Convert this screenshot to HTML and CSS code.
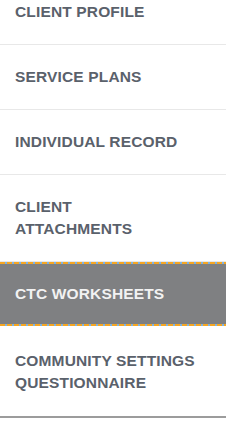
FILE: index.html
```html
<!DOCTYPE html>
<html lang="en">
<head>
    <meta charset="UTF-8">
    <meta name="viewport" content="width=device-width, initial-scale=1.0">
    <title>Client menu</title>
    <link rel="stylesheet" href="styles.css">
</head>
<body>
    <nav class="side-menu">
        <ul class="menu-list">
            <li class="menu-item"><a href="#">Client Profile</a></li>
            <li class="menu-item"><a href="#">Service Plans</a></li>
            <li class="menu-item"><a href="#">Individual Record</a></li>
            <li class="menu-item"><a href="#">Client<br>Attachments</a></li>
            <li class="menu-item active"><a href="#">CTC Worksheets</a></li>
            <li class="menu-item last"><a href="#">Community Settings<br>Questionnaire</a></li>
        </ul>
    </nav>
</body>
</html>
```

FILE: styles.css
```css
body {
    margin: 0;
    padding: 0;
    background: #fff;
    overflow: hidden;
}
.side-menu {
    width: 226px;
    margin-top: -20px;
}
.menu-list {
    list-style: none;
    margin: 0;
    padding: 0;
}
.menu-item {
    border-bottom: 1px solid #e8e8e8;
}
.menu-item a {
    display: block;
    padding: 21px 15px;
    font-family: "Liberation Sans", Arial, sans-serif;
    font-weight: bold;
    font-size: 15.5px;
    letter-spacing: 0.15px;
    line-height: 22px;
    text-transform: uppercase;
    text-decoration: none;
    color: #5a616b;
}
.menu-item.active {
    border-bottom: none;
    background-color: #7f8082;
    position: relative;
}
/* dashed focus strips, orange over blue */
.menu-item.active::before,
.menu-item.active::after {
    content: "";
    position: absolute;
    left: 0;
    right: 0;
    height: 2px;
    background: repeating-linear-gradient(90deg, #f5a623 0 5px, #7fb3e0 5px 7px);
}
.menu-item.active::before {
    top: 0;
}
.menu-item.active::after {
    bottom: 0;
}
.menu-item.active a {
    color: #f2f2f2;
}
.menu-item.last {
    border-bottom: 2px solid #9c9c9c;
}
.menu-item.last a {
    padding-top: 24px;
    padding-bottom: 22px;
}
```
